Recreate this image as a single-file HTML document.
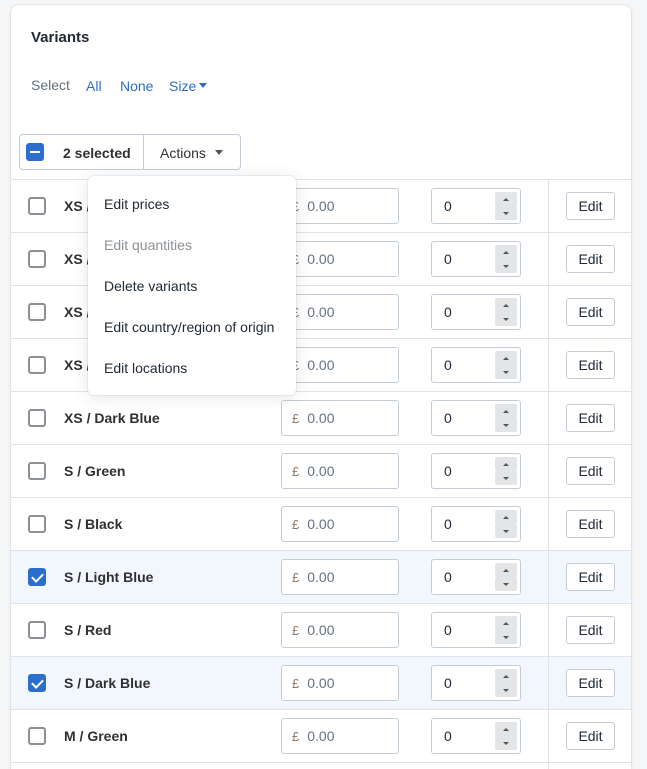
<!DOCTYPE html>
<html style="width:647px;height:769px;overflow:hidden"><head><meta charset="utf-8"><style>
*{box-sizing:border-box;margin:0;padding:0}
body{width:647px;height:769px;overflow:hidden;background:#f4f6f8;font-family:"Liberation Sans",sans-serif;font-size:14px;color:#212b36;position:relative}
.card{position:absolute;left:11px;top:5px;width:620px;height:764px;background:#fff;border-radius:8px 8px 0 0;box-shadow:0 0 0 1px rgba(63,63,68,.05),0 1px 3px rgba(63,63,68,.15)}
.a{position:absolute}
.row{position:absolute;left:11px;width:620px;height:53px;border-top:1px solid #dfe3e8}
.row.sel{background:#f2f7fe}
.cb{position:absolute;left:17px;top:17px;width:18px;height:18px;border:2px solid #8c9196;border-radius:3px;background:#fff}
.cb.on{background:#2c6ecb;border-color:#2c6ecb}
.cb.on:after{content:"";position:absolute;left:4px;top:1px;width:5px;height:9px;border:solid #fff;border-width:0 2px 2px 0;transform:rotate(45deg)}
.nm{position:absolute;left:53px;top:18px;font-weight:bold;color:#303030;font-size:14px}
.pr{position:absolute;left:270px;top:8px;width:118px;height:36px;border:1px solid #c4cdd5;border-radius:3px;padding:9px 0 0 10px;color:#637381}
.pr b{font-weight:normal;color:#8c7a6b;margin-right:8px;font-size:13px}
.qt{position:absolute;left:420px;top:8px;width:90px;height:36px;border:1px solid #c4cdd5;border-radius:3px;padding:9px 0 0 12px;color:#212b36}
.sp{position:absolute;right:3px;width:22px;height:14px;background:#e4e5e7;border-radius:2px}
.sp:after{content:"";position:absolute;left:8px;top:5px;border:3px solid transparent}
.up{top:3px}.up:after{border-bottom:3px solid #555;top:3px}
.dn{bottom:3px}.dn:after{border-top:3px solid #555;top:6px}
.dv{position:absolute;left:537px;top:0;height:53px;border-left:1px solid #dfe3e8}
.ed{position:absolute;left:555px;top:12px;width:49px;height:28px;border:1px solid #c4cdd5;border-radius:3px;text-align:center;line-height:26px;font-size:14px;color:#212b36;background:#fff}
.menu{position:absolute;left:88px;top:176px;width:208px;height:219px;background:#fff;border-radius:6px;box-shadow:0 0 0 1px rgba(6,44,82,.06),0 2px 16px rgba(33,43,54,.12)}
.menu div{position:absolute;left:16px;font-size:14px;color:#212b36}
</style></head><body>
<div class="card"></div>
<div class="a" style="left:31px;top:29px;font-size:15px;font-weight:bold;color:#212b36">Variants</div>
<div class="a" style="left:31px;top:77px;color:#637381">Select</div>
<div class="a" style="left:86px;top:78px;color:#2c6ecb">All</div>
<div class="a" style="left:120px;top:78px;color:#2c6ecb">None</div>
<div class="a" style="left:169px;top:78px;color:#2c6ecb">Size</div>
<div class="a" style="left:199px;top:83px;border:4px solid transparent;border-top:5px solid #2c6ecb"></div>

<div class="a" style="left:19px;top:134px;width:222px;height:36px;border:1px solid #c4cdd5;border-radius:4px;background:#fff"></div>
<div class="a" style="left:143px;top:134px;height:36px;border-left:1px solid #c4cdd5"></div>
<div class="a" style="left:26px;top:143px;width:18px;height:18px;background:#2c6ecb;border-radius:3px"></div>
<div class="a" style="left:30px;top:151px;width:10px;height:2px;background:#fff"></div>
<div class="a" style="left:63px;top:145px;font-weight:bold;color:#303030">2 selected</div>
<div class="a" style="left:160px;top:145px;color:#303030">Actions</div>
<div class="a" style="left:215px;top:150px;border:4px solid transparent;border-top:5px solid #555"></div>

<div class="row" style="top:179px"><div class="cb"></div><div class="nm">XS / Green</div><div class="pr"><b>£</b>0.00</div><div class="qt">0<span class="sp up"></span><span class="sp dn"></span></div><div class="dv"></div><div class="ed">Edit</div></div>
<div class="row" style="top:232px"><div class="cb"></div><div class="nm">XS / Black</div><div class="pr"><b>£</b>0.00</div><div class="qt">0<span class="sp up"></span><span class="sp dn"></span></div><div class="dv"></div><div class="ed">Edit</div></div>
<div class="row" style="top:285px"><div class="cb"></div><div class="nm">XS / Light Blue</div><div class="pr"><b>£</b>0.00</div><div class="qt">0<span class="sp up"></span><span class="sp dn"></span></div><div class="dv"></div><div class="ed">Edit</div></div>
<div class="row" style="top:338px"><div class="cb"></div><div class="nm">XS / Red</div><div class="pr"><b>£</b>0.00</div><div class="qt">0<span class="sp up"></span><span class="sp dn"></span></div><div class="dv"></div><div class="ed">Edit</div></div>
<div class="row" style="top:391px"><div class="cb"></div><div class="nm">XS / Dark Blue</div><div class="pr"><b>£</b>0.00</div><div class="qt">0<span class="sp up"></span><span class="sp dn"></span></div><div class="dv"></div><div class="ed">Edit</div></div>
<div class="row" style="top:444px"><div class="cb"></div><div class="nm">S / Green</div><div class="pr"><b>£</b>0.00</div><div class="qt">0<span class="sp up"></span><span class="sp dn"></span></div><div class="dv"></div><div class="ed">Edit</div></div>
<div class="row" style="top:497px"><div class="cb"></div><div class="nm">S / Black</div><div class="pr"><b>£</b>0.00</div><div class="qt">0<span class="sp up"></span><span class="sp dn"></span></div><div class="dv"></div><div class="ed">Edit</div></div>
<div class="row sel" style="top:550px"><div class="cb on"></div><div class="nm">S / Light Blue</div><div class="pr" style="background:#fff"><b>£</b>0.00</div><div class="qt" style="background:#fff">0<span class="sp up"></span><span class="sp dn"></span></div><div class="dv"></div><div class="ed">Edit</div></div>
<div class="row" style="top:603px"><div class="cb"></div><div class="nm">S / Red</div><div class="pr"><b>£</b>0.00</div><div class="qt">0<span class="sp up"></span><span class="sp dn"></span></div><div class="dv"></div><div class="ed">Edit</div></div>
<div class="row sel" style="top:656px"><div class="cb on"></div><div class="nm">S / Dark Blue</div><div class="pr" style="background:#fff"><b>£</b>0.00</div><div class="qt" style="background:#fff">0<span class="sp up"></span><span class="sp dn"></span></div><div class="dv"></div><div class="ed">Edit</div></div>
<div class="row" style="top:709px;height:53px"><div class="cb"></div><div class="nm">M / Green</div><div class="pr"><b>£</b>0.00</div><div class="qt">0<span class="sp up"></span><span class="sp dn"></span></div><div class="dv"></div><div class="ed">Edit</div></div>
<div class="a" style="left:11px;top:762px;width:620px;height:7px;border-top:1px solid #dfe3e8"></div>
<div class="a" style="left:548px;top:762px;height:7px;border-left:1px solid #dfe3e8"></div>

<div class="menu">
<div style="top:20px">Edit prices</div>
<div style="top:61px;color:#8c9196">Edit quantities</div>
<div style="top:102px">Delete variants</div>
<div style="top:143px">Edit country/region of origin</div>
<div style="top:184px">Edit locations</div>
</div>
</body></html>
